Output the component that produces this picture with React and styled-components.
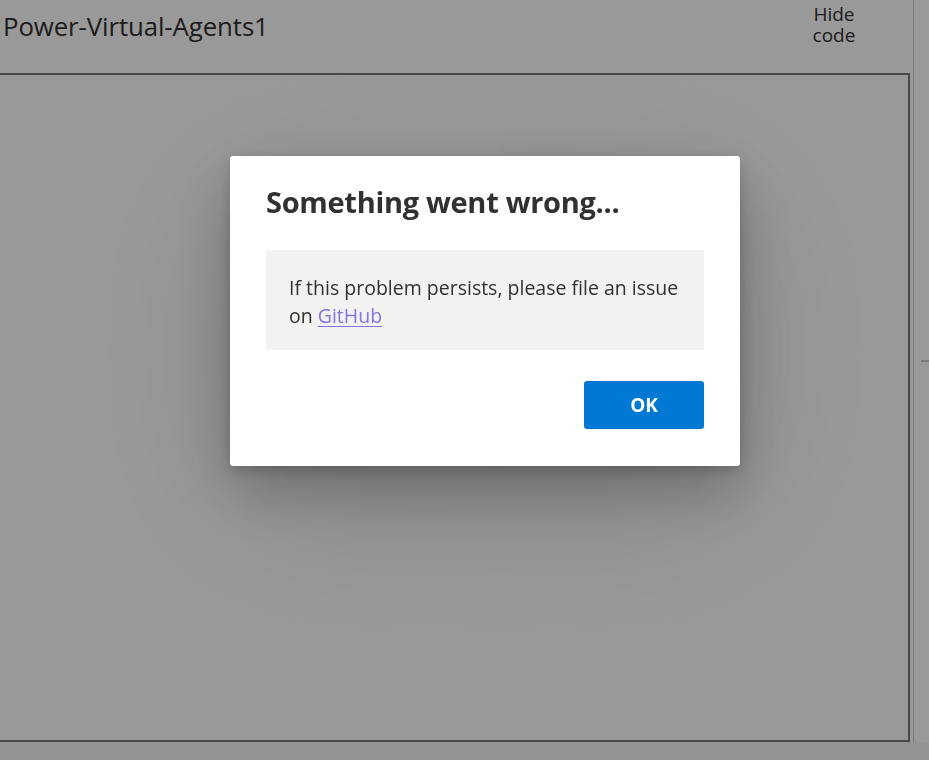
import React from "react";
import styled, { createGlobalStyle } from "styled-components";

const Global = createGlobalStyle`
  html, body { margin: 0; padding: 0; height: 100%; }
  body { font-family: "Open Sans", "Noto Sans", sans-serif; background: #ffffff; overflow: hidden; }
  #root { height: 100%; }
`;

const Page = styled.div`
  width: 929px;
  height: 760px;
  display: grid;
  grid-template-columns: 912px 17px;
  grid-template-rows: 742px 18px;
  background: #ffffff;
`;

const Main = styled.div`
  display: flex;
  flex-direction: column;
  min-width: 0;
`;

const Header = styled.header`
  height: 73px;
  display: flex;
  align-items: flex-start;
  justify-content: space-between;
  padding-right: 52px;
`;

const Title = styled.h1`
  margin: 9px 0 0 3px;
  font-family: "Open Sans", sans-serif;
  font-weight: 400;
  font-size: 25.8px;
  line-height: 34px;
  color: #323130;
  letter-spacing: -0.1px;
`;

const HideButton = styled.button`
  margin-top: 4px;
  border: none;
  background: transparent;
  padding: 0;
  font-family: "Open Sans", sans-serif;
  font-size: 19px;
  line-height: 21px;
  color: #323130;
  text-align: center;
  width: 52px;
`;

const Frame = styled.div`
  flex: 1;
  margin-left: -2px;
  margin-right: 2px;
  border: 2px solid #7b7b7b;
  background: #ffffff;
`;

const Rail = styled.div`
  border-left: 1px solid #cccccc;
  margin-left: 1px;
  display: flex;
  flex-direction: column;
  padding-top: 360px;
`;

const Tick = styled.div`
  height: 2px;
  margin-left: 7px;
  background: #cccccc;
`;

const BottomStrip = styled.div`
  grid-column: 1 / span 2;
  background: #f6f6f6;
`;

const Overlay = styled.div`
  position: fixed;
  inset: 0;
  background: rgba(0, 0, 0, 0.4);
  display: flex;
  align-items: flex-start;
  padding: 156px 0 0 230px;
`;

const Dialog = styled.div`
  width: 510px;
  box-sizing: border-box;
  background: #ffffff;
  border-radius: 3px;
  padding: 27px 36px 37px 36px;
  box-shadow: 0 26px 58px rgba(0, 0, 0, 0.22), 0 5px 14px rgba(0, 0, 0, 0.18),
    0 40px 160px rgba(0, 0, 0, 0.14);
  display: flex;
  flex-direction: column;
`;

const DialogTitle = styled.h2`
  margin: 0;
  font-family: "Open Sans", sans-serif;
  font-weight: 700;
  font-size: 29px;
  line-height: 38px;
  color: #323130;
  letter-spacing: -0.3px;
`;

const MessageBar = styled.div`
  margin-top: 29px;
  background: #f3f2f1;
  padding: 24px 23px 20px 23px;
  font-family: "Open Sans", sans-serif;
  font-size: 19.5px;
  line-height: 28px;
  color: #323130;
`;

const Link = styled.a`
  color: #8177e0;
  text-decoration: underline;
  text-underline-offset: 3px;
  cursor: pointer;
`;

const Footer = styled.div`
  margin-top: 31px;
  display: flex;
  justify-content: flex-end;
`;

const PrimaryButton = styled.button`
  width: 120px;
  height: 48px;
  border: none;
  border-radius: 3px;
  background: #0078d4;
  color: #ffffff;
  font-family: "Open Sans", sans-serif;
  font-weight: 700;
  font-size: 19px;
  cursor: pointer;
`;

export default function App() {
  return (
    <>
      <Global />
      <Page>
        <Main>
          <Header>
            <Title>Power-Virtual-Agents1</Title>
            <HideButton>Hide code</HideButton>
          </Header>
          <Frame />
        </Main>
        <Rail>
          <Tick />
        </Rail>
        <BottomStrip />
      </Page>
      <Overlay>
        <Dialog role="dialog" aria-modal="true">
          <DialogTitle>Something went wrong...</DialogTitle>
          <MessageBar>
            If this problem persists, please file an issue on <Link>GitHub</Link>
          </MessageBar>
          <Footer>
            <PrimaryButton>OK</PrimaryButton>
          </Footer>
        </Dialog>
      </Overlay>
    </>
  );
}
